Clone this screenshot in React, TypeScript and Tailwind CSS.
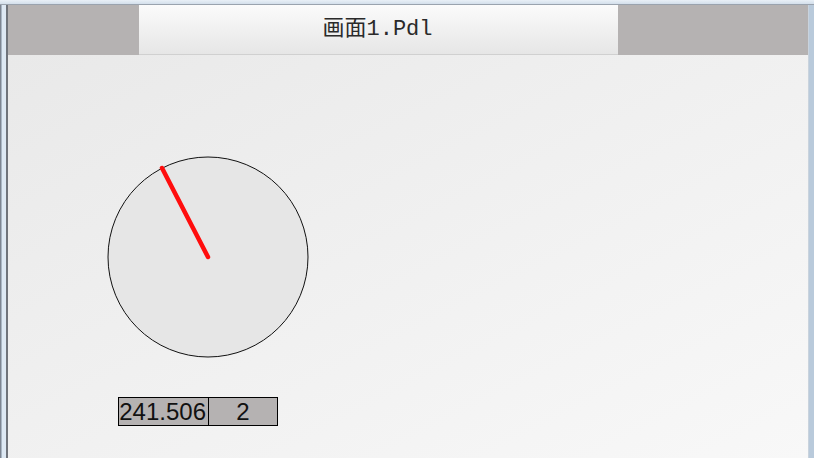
import React from "react";

export default function App() {
  return (
    <div className="w-[814px] h-[458px] flex flex-col overflow-hidden bg-[#dde7f1]">
      <div className="h-[4px] bg-gradient-to-b from-[#e9f0f7] to-[#d3dfeb] border-b border-[#9aa3ae] box-content" />
      <div className="flex flex-1 min-h-0">
        <div className="w-[8px] flex">
          <div className="w-[1px] bg-[#7d8591]" />
          <div className="w-[1px] bg-[#a9b6c4]" />
          <div className="w-[4px] bg-[#dde8f3]" />
          <div className="w-[2px] bg-[#6f737a]" />
        </div>
        <div className="flex-1 flex flex-col min-w-0">
          <div className="h-[50px] flex">
            <div className="w-[131px] bg-[#b5b2b2]" />
            <div className="w-[479px] bg-gradient-to-b from-[#fbfbfb] to-[#e6e6e6] border-b border-[#d0d0d0] flex items-center justify-center">
              <span
                className="text-[22px] text-[#2a2a2a] leading-none pr-[2px]"
                style={{ fontFamily: '"Liberation Mono", "Noto Sans CJK SC", monospace' }}
              >
                画面1.Pdl
              </span>
            </div>
            <div className="flex-1 bg-[#b5b2b2]" />
          </div>
          <div className="flex-1 bg-gradient-to-br from-[#e9e9e9] to-[#f8f8f8] flex flex-col">
            <svg width="202" height="202" viewBox="-1 -1 202 202" className="ml-[99px] mt-[101px]">
              <circle cx="100" cy="100" r="100" fill="#e6e6e6" stroke="#111" strokeWidth="1" />
              <line x1="100" y1="100" x2="54" y2="11" stroke="#ff0d0d" strokeWidth="4.5" strokeLinecap="round" />
            </svg>
            <div
              className="ml-[110px] mt-[39px] flex h-[29px] text-[24px] leading-none text-[#111]"
              style={{ fontFamily: '"Liberation Sans", Arial, sans-serif' }}
            >
              <div className="w-[91px] border border-black bg-[#b5b2b2] flex items-center justify-end pr-[2px]">241.506</div>
              <div className="w-[69px] border border-l-0 border-black bg-[#b5b2b2] flex items-center justify-center">2</div>
            </div>
          </div>
        </div>
        <div className="w-[6px] flex">
          <div className="w-[1px] bg-[#c9d3dd]" />
          <div className="flex-1 bg-[#b9cadb]" />
        </div>
      </div>
    </div>
  );
}
